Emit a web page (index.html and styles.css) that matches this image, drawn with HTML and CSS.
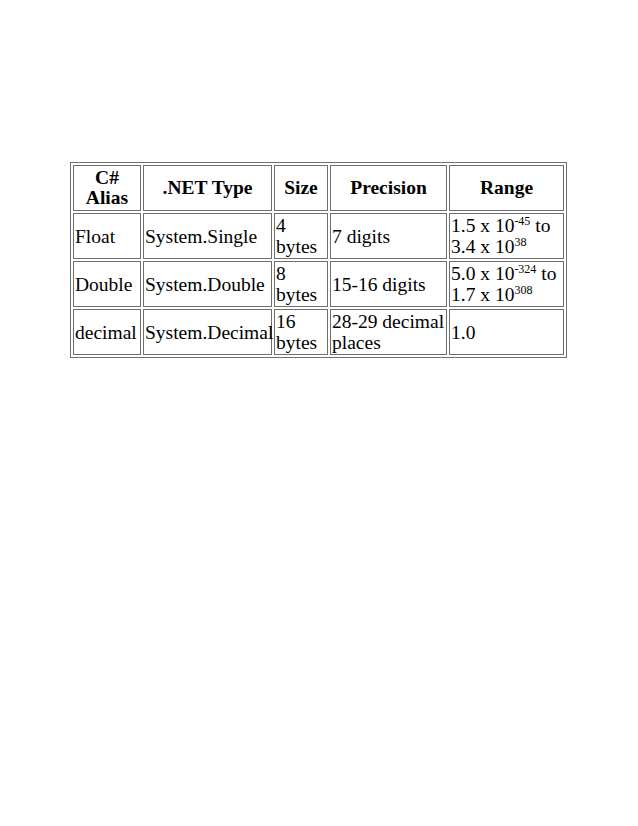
FILE: index.html
```html
<!DOCTYPE html>
<html>
<head>
<meta charset="utf-8">
<link rel="stylesheet" href="styles.css">
</head>
<body>
<div class="page">
<table class="types">
  <colgroup>
    <col class="c1"><col class="c2"><col class="c3"><col class="c4"><col class="c5">
  </colgroup>
  <tr class="head">
    <th>C#<br>Alias</th>
    <th>.NET Type</th>
    <th>Size</th>
    <th>Precision</th>
    <th>Range</th>
  </tr>
  <tr>
    <td>Float</td>
    <td>System.Single</td>
    <td>4<br>bytes</td>
    <td>7 digits</td>
    <td>1.5 x 10<sup>-45</sup> to<br>3.4 x 10<sup>38</sup></td>
  </tr>
  <tr>
    <td>Double</td>
    <td>System.Double</td>
    <td>8<br>bytes</td>
    <td>15-16 digits</td>
    <td>5.0 x 10<sup>-324</sup> to<br>1.7 x 10<sup>308</sup></td>
  </tr>
  <tr>
    <td>decimal</td>
    <td>System.Decimal</td>
    <td>16<br>bytes</td>
    <td>28-29 decimal<br>places</td>
    <td>1.0</td>
  </tr>
</table>
</div>
</body>
</html>
```

FILE: styles.css
```css
html, body {
  margin: 0;
  padding: 0;
  background: #ffffff;
}
.page {
  padding-top: 162px;
  padding-left: 70px;
}
.types {
  font-family: "Liberation Serif", "Times New Roman", serif;
  font-size: 19.5px;
  line-height: 21px;
  color: #000000;
  border: 1px solid #6e6e6e;
  border-collapse: separate;
  border-spacing: 2px;
  table-layout: fixed;
  width: 497px;
}
.c1 { width: 68px; }
.c2 { width: 129px; }
.c3 { width: 54px; }
.c4 { width: 117px; }
.c5 { width: 115px; }
.types th,
.types td {
  border: 1px solid #6e6e6e;
  height: 46px;
  padding: 0 1px;
  box-sizing: border-box;
  vertical-align: middle;
  white-space: nowrap;
  overflow: visible;
}
.types th {
  font-weight: bold;
  text-align: center;
  line-height: 20px;
}
.types td {
  text-align: left;
}
.types tr {
  height: 46px;
}
.types sup {
  font-size: 12px;
  line-height: 0;
  vertical-align: 7px;
}
```
